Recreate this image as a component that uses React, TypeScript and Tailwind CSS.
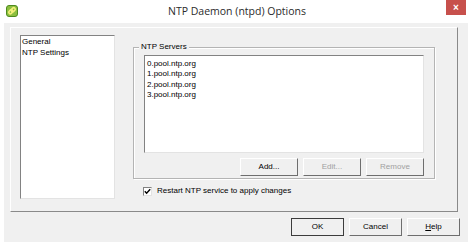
import React from "react";

const body = { fontFamily: '"Liberation Sans", Arial, sans-serif' };

function Btn({ label, disabled, def, w }: { label: React.ReactNode; disabled?: boolean; def?: boolean; w: string }) {
  return (
    <div
      className={`${w} h-[18px] flex items-center justify-center text-[8px] bg-[#f0f0f0] border ${
        def ? "border-[#3c3c3c]" : "border-t-white border-l-white border-r-[#6e6e6e] border-b-[#6e6e6e]"
      } ${disabled ? "text-[#a0a0a0]" : "text-black"}`}
      style={body}
    >
      {label}
    </div>
  );
}

export default function App() {
  return (
    <div className="w-[474px] h-[247px] bg-white flex flex-col" style={body}>
      {/* title bar */}
      <div className="h-[23px] flex items-start shrink-0">
        <div className="w-[28px] pl-[6px] pt-[5px]">
          <svg width="12" height="12" viewBox="0 0 12 12">
            <rect x="0.5" y="0.5" width="11" height="11" rx="2.5" fill="#8cbf3f" stroke="#4e8a1e" />
            <g fill="none" stroke="#f4ef7a" strokeWidth="1.6">
              <rect x="2.6" y="5.2" width="4.4" height="3" rx="1.4" transform="rotate(-45 4.8 6.7)" />
              <rect x="5" y="3.2" width="4.4" height="3" rx="1.4" transform="rotate(-45 7.2 4.7)" />
            </g>
          </svg>
        </div>
        <div
          className="flex-1 h-[23px] flex items-center justify-center text-[10.5px] text-[#2b2b2b]"
          style={{ fontFamily: '"Open Sans", "Noto Sans", sans-serif' }}
        >
          NTP Daemon (ntpd) Options
        </div>
        <div className="w-[28px] pr-[8px]">
          <div className="w-[20px] h-[15px] bg-[#c7504c] flex items-center justify-center text-white text-[10px] font-bold leading-none">
            ×
          </div>
        </div>
      </div>

      {/* client */}
      <div className="ml-[4px] mr-[6px] h-[219px] bg-[#f0f0f0] flex flex-col">
        <div className="ml-[6px] mt-[4px] mr-[10px] h-[185px] border border-t-white border-l-white border-r-[#8a8a8a] border-b-[#8a8a8a] flex pl-[9px] pt-[7px]">
          {/* left list */}
          <div className="w-[95px] h-[164px] bg-white border border-t-[#828282] border-l-[#828282] border-r-[#e3e3e3] border-b-[#e3e3e3] pt-[1px] pl-[1px] text-[8px] leading-[10.5px] text-black">
            <div>General</div>
            <div>NTP Settings</div>
          </div>

          {/* right column */}
          <div className="ml-[18px] pt-[12px] flex flex-col">
            <div className="relative w-[302px] h-[132px] border border-[#b4b4b4] shadow-[inset_1px_1px_0_#ffffff,1px_1px_0_#ffffff] pl-[10px] pt-[7px]">
              <div className="absolute left-[5px] top-[-6px] px-[2px] bg-[#f0f0f0] text-[8px] leading-[10px] text-black">
                NTP Servers
              </div>
              <div className="w-[280px] h-[98px] bg-white border border-t-[#828282] border-l-[#828282] border-r-[#e3e3e3] border-b-[#e3e3e3] pl-[2px] pt-[3px] text-[8px] leading-[10.4px] text-black">
                <div>0.pool.ntp.org</div>
                <div>1.pool.ntp.org</div>
                <div>2.pool.ntp.org</div>
                <div>3.pool.ntp.org</div>
              </div>
              <div className="w-[280px] mt-[5px] flex justify-end gap-[5px]">
                <Btn w="w-[58px]" label="Add..." />
                <Btn w="w-[58px]" label="Edit..." disabled />
                <Btn w="w-[58px]" label="Remove" disabled />
              </div>
            </div>
            <div className="mt-[7px] ml-[10px] flex items-center gap-[5px]">
              <div className="w-[9px] h-[9px] bg-white border border-t-[#828282] border-l-[#828282] border-r-[#e3e3e3] border-b-[#e3e3e3] flex items-center justify-center">
                <svg width="7" height="7" viewBox="0 0 7 7">
                  <path d="M0.8 3.2 L2.6 5.2 L6.2 1.2" fill="none" stroke="#000" strokeWidth="1.4" />
                </svg>
              </div>
              <div className="text-[8px] leading-[10px] text-black">Restart NTP service to apply changes</div>
            </div>
          </div>
        </div>

        {/* bottom buttons */}
        <div className="mt-[6px] pr-[8px] flex justify-end gap-[5px]">
          <Btn w="w-[53px]" label="OK" def />
          <Btn w="w-[53px]" label="Cancel" />
          <Btn
            w="w-[53px]"
            label={
              <span>
                <span className="underline">H</span>elp
              </span>
            }
          />
        </div>
      </div>
    </div>
  );
}
